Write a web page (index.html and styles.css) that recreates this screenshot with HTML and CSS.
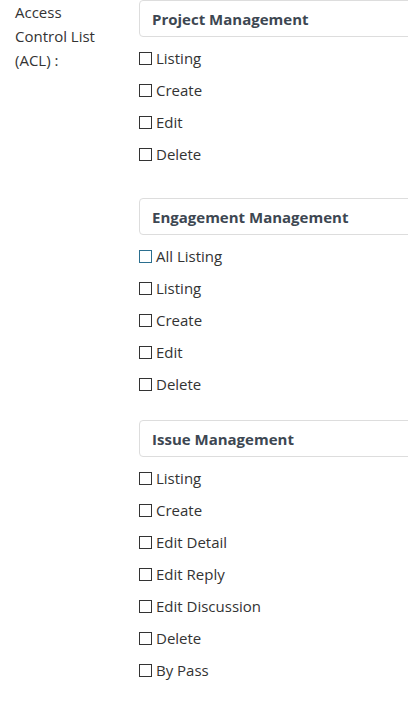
FILE: index.html
```html
<!DOCTYPE html>
<html>
<head>
    <title>Access Control List</title>
    <link rel="stylesheet" href="styles.css">
</head>
<body>
    <div class="form-row">
        <label class="form-label">Access Control List (ACL) :</label>
        <div class="acl">
            <div class="acl-group acl-group-wide">
                <div class="acl-title">Project Management</div>
                <div class="acl-list">
                    <label class="acl-item"><input type="checkbox"> Listing</label>
                    <label class="acl-item"><input type="checkbox"> Create</label>
                    <label class="acl-item"><input type="checkbox"> Edit</label>
                    <label class="acl-item"><input type="checkbox"> Delete</label>
                </div>
            </div>

            <div class="acl-group">
                <div class="acl-title">Engagement Management</div>
                <div class="acl-list">
                    <label class="acl-item"><input type="checkbox" class="focused"> All Listing</label>
                    <label class="acl-item"><input type="checkbox"> Listing</label>
                    <label class="acl-item"><input type="checkbox"> Create</label>
                    <label class="acl-item"><input type="checkbox"> Edit</label>
                    <label class="acl-item"><input type="checkbox"> Delete</label>
                </div>
            </div>

            <div class="acl-group">
                <div class="acl-title">Issue Management</div>
                <div class="acl-list">
                    <label class="acl-item"><input type="checkbox"> Listing</label>
                    <label class="acl-item"><input type="checkbox"> Create</label>
                    <label class="acl-item"><input type="checkbox"> Edit Detail</label>
                    <label class="acl-item"><input type="checkbox"> Edit Reply</label>
                    <label class="acl-item"><input type="checkbox"> Edit Discussion</label>
                    <label class="acl-item"><input type="checkbox"> Delete</label>
                    <label class="acl-item"><input type="checkbox"> By Pass</label>
                </div>
            </div>
        </div>
    </div>
</body>
</html>
```

FILE: styles.css
```css
* {
    box-sizing: border-box;
}

body {
    font-family: "Open Sans", "Noto Sans", sans-serif;
    font-size: 15px;
    color: #333;
    margin: 0;
    padding: 0;
    background-color: #fff;
    overflow: hidden;
}

.form-row {
    display: flex;
}

.form-label {
    width: 139px;
    flex-shrink: 0;
    padding: 0 30px 0 15px;
    line-height: 24px;
}

.acl {
    width: 300px;
    flex-shrink: 0;
}

.acl-group {
    margin-bottom: 24px;
}

.acl-group-wide {
    margin-bottom: 32px;
}

.acl-title {
    height: 37px;
    padding: 0 12px;
    line-height: 36px;
    font-weight: bold;
    color: #3d4752;
    border: 1px solid #ddd;
    border-radius: 4px;
    background-color: #fff;
}

.acl-list {
    display: flex;
    flex-direction: column;
    gap: 8px;
    padding-top: 9px;
}

.acl-item {
    display: flex;
    align-items: center;
    gap: 4px;
    height: 24px;
    line-height: 24px;
}

.acl-item input {
    appearance: none;
    margin: 0;
    width: 13px;
    height: 13px;
    border: 1px solid #333;
    background-color: #fff;
}

.acl-item input.focused {
    border-color: #2b6f8f;
}
```
